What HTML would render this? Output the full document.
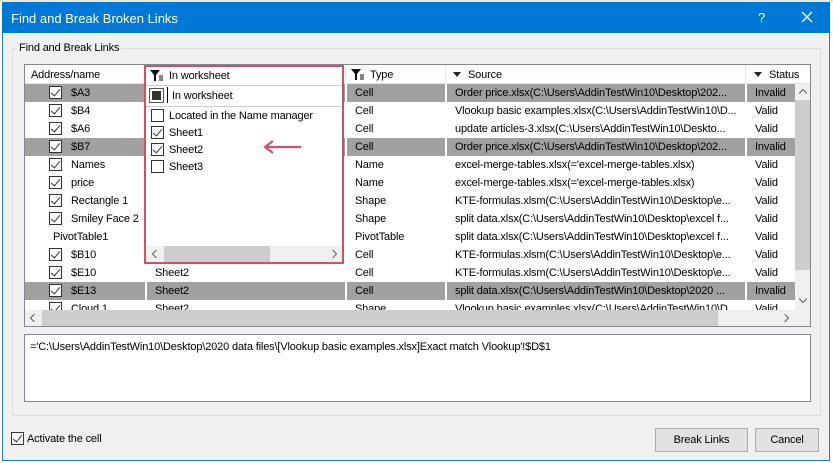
<!DOCTYPE html><html><head><style>
*{box-sizing:border-box;margin:0;padding:0}
body{width:833px;height:463px;position:relative;overflow:hidden;background:#fff;font-family:"Liberation Sans",sans-serif;font-size:11px;color:#000;letter-spacing:-0.15px}
.a{position:absolute}
.dlg{left:2px;top:2px;width:828px;height:459px;background:#f0f0f0;border:1px solid #1c79d4}
.title{left:2px;top:2px;width:828px;height:31px;background:#0078d7;color:#fff;font-size:13px;padding:9px 0 0 9px;letter-spacing:0}
.grp{left:12px;top:48px;width:809px;height:368px;border:1px solid #dcdcdc}
.list{left:24px;top:64px;width:787px;height:263px;background:#fff;border:1px solid #828790;overflow:hidden}
.hdr{left:0;top:0;width:785px;height:19px;background:#fff;border-bottom:1px solid #e5e5e5}
.hc{position:absolute;top:0;height:19px;padding:4px 0 0 6px;border-right:1px solid #e5e5e5}
.row{position:absolute;left:0;width:770px;height:18px}
.row.s{background:#a0a0a0}
.c{position:absolute;top:3px;white-space:nowrap}
.cb{position:absolute;width:13px;height:13px;border:1px solid #333;background:#fff}
.cb.k::after{content:"";position:absolute;left:3px;top:0px;width:4px;height:8px;border:solid #333;border-width:0 1.3px 1.3px 0;transform:rotate(40deg)}
.sep{position:absolute;top:0;width:2px;height:18px;background:#fff}
.pop{left:144px;top:65px;width:200px;height:199px;background:#fff;border:2px solid #d0506a}
.btn{position:absolute;top:428px;height:24px;background:#e1e1e1;border:1px solid #adadad;text-align:center;padding-top:5px}
</style></head><body>
<div class="a" style="left:0;top:0;width:833px;height:2px;background:#e8e8e8"></div>
<div class="a dlg"></div>
<div class="a title">Find and Break Broken Links</div>
<div class="a" style="left:758px;top:10px;color:#fff;font-size:13px">?</div>
<svg class="a" style="left:801px;top:11px" width="12" height="12"><path d="M1 1L11 11M11 1L1 11" stroke="#fff" stroke-width="1.3"/></svg>
<div class="a grp"></div>
<div class="a" style="left:17px;top:42px;background:#f0f0f0;padding:0 2px">Find and Break Links</div>
<div class="a list">
 <div class="a hdr">
  <div class="hc" style="left:0;width:120px">Address/name</div>
  <div class="hc" style="left:120px;width:201px"></div>
  <div class="hc" style="left:321px;width:100px;padding-left:24px">Type</div>
  <div class="hc" style="left:421px;width:300px;padding-left:22px">Source</div>
  <div class="hc" style="left:721px;width:64px;padding-left:23px;border:0">Status</div>
 </div>
 <svg class="a" style="left:326px;top:4px" width="14" height="12"><path d="M0 0H10L6 5V11H4V5Z" fill="#111"/><path d="M9 6H13M9 8H13M9 10H13" stroke="#111" stroke-width="1"/></svg>
 <svg class="a" style="left:428px;top:7px" width="8" height="5"><path d="M0 0H8L4 5Z" fill="#222"/></svg>
 <svg class="a" style="left:729px;top:7px" width="8" height="5"><path d="M0 0H8L4 5Z" fill="#222"/></svg>
 <div class="row s" style="top:19px"><div class="cb k" style="left:24px;top:2px"></div><div class="c" style="left:46px">$A3</div><div class="sep" style="left:320px"></div><div class="c" style="left:330px">Cell</div><div class="sep" style="left:420px"></div><div class="c" style="left:430px">Order price.xlsx(C:\Users\AddinTestWin10\Desktop\202...</div><div class="sep" style="left:720px"></div><div class="c" style="left:730px">Invalid</div></div>
 <div class="row" style="top:37px"><div class="cb k" style="left:24px;top:2px"></div><div class="c" style="left:46px">$B4</div><div class="c" style="left:330px">Cell</div><div class="c" style="left:430px">Vlookup basic examples.xlsx(C:\Users\AddinTestWin10\D...</div><div class="c" style="left:730px">Valid</div></div>
 <div class="row" style="top:55px"><div class="cb k" style="left:24px;top:2px"></div><div class="c" style="left:46px">$A6</div><div class="c" style="left:330px">Cell</div><div class="c" style="left:430px">update articles-3.xlsx(C:\Users\AddinTestWin10\Deskto...</div><div class="c" style="left:730px">Valid</div></div>
 <div class="row s" style="top:73px"><div class="cb k" style="left:24px;top:2px"></div><div class="c" style="left:46px">$B7</div><div class="sep" style="left:320px"></div><div class="c" style="left:330px">Cell</div><div class="sep" style="left:420px"></div><div class="c" style="left:430px">Order price.xlsx(C:\Users\AddinTestWin10\Desktop\202...</div><div class="sep" style="left:720px"></div><div class="c" style="left:730px">Invalid</div></div>
 <div class="row" style="top:91px"><div class="cb k" style="left:24px;top:2px"></div><div class="c" style="left:46px">Names</div><div class="c" style="left:330px">Name</div><div class="c" style="left:430px">excel-merge-tables.xlsx(='excel-merge-tables.xlsx)</div><div class="c" style="left:730px">Valid</div></div>
 <div class="row" style="top:109px"><div class="cb k" style="left:24px;top:2px"></div><div class="c" style="left:46px">price</div><div class="c" style="left:330px">Name</div><div class="c" style="left:430px">excel-merge-tables.xlsx(='excel-merge-tables.xlsx)</div><div class="c" style="left:730px">Valid</div></div>
 <div class="row" style="top:127px"><div class="cb k" style="left:24px;top:2px"></div><div class="c" style="left:46px">Rectangle 1</div><div class="c" style="left:330px">Shape</div><div class="c" style="left:430px">KTE-formulas.xlsm(C:\Users\AddinTestWin10\Desktop\e...</div><div class="c" style="left:730px">Valid</div></div>
 <div class="row" style="top:145px"><div class="cb k" style="left:24px;top:2px"></div><div class="c" style="left:46px">Smiley Face 2</div><div class="c" style="left:330px">Shape</div><div class="c" style="left:430px">split data.xlsx(C:\Users\AddinTestWin10\Desktop\excel f...</div><div class="c" style="left:730px">Valid</div></div>
 <div class="row" style="top:163px"><div class="c" style="left:28px">PivotTable1</div><div class="c" style="left:330px">PivotTable</div><div class="c" style="left:430px">split data.xlsx(C:\Users\AddinTestWin10\Desktop\excel f...</div><div class="c" style="left:730px">Valid</div></div>
 <div class="row" style="top:181px"><div class="cb k" style="left:24px;top:2px"></div><div class="c" style="left:46px">$B10</div><div class="c" style="left:330px">Cell</div><div class="c" style="left:430px">KTE-formulas.xlsm(C:\Users\AddinTestWin10\Desktop\e...</div><div class="c" style="left:730px">Valid</div></div>
 <div class="row" style="top:199px"><div class="cb k" style="left:24px;top:2px"></div><div class="c" style="left:46px">$E10</div><div class="c" style="left:130px">Sheet2</div><div class="c" style="left:330px">Cell</div><div class="c" style="left:430px">KTE-formulas.xlsm(C:\Users\AddinTestWin10\Desktop\e...</div><div class="c" style="left:730px">Valid</div></div>
 <div class="row s" style="top:217px"><div class="cb k" style="left:24px;top:2px"></div><div class="c" style="left:46px">$E13</div><div class="sep" style="left:120px"></div><div class="c" style="left:130px">Sheet2</div><div class="sep" style="left:320px"></div><div class="c" style="left:330px">Cell</div><div class="sep" style="left:420px"></div><div class="c" style="left:430px">split data.xlsx(C:\Users\AddinTestWin10\Desktop\2020 ...</div><div class="sep" style="left:720px"></div><div class="c" style="left:730px">Invalid</div></div>
 <div class="row" style="top:235px"><div class="cb k" style="left:24px;top:2px"></div><div class="c" style="left:46px">Cloud 1</div><div class="c" style="left:130px">Sheet2</div><div class="c" style="left:330px">Shape</div><div class="c" style="left:430px">Vlookup basic examples.xlsx(C:\Users\AddinTestWin10\D...</div><div class="c" style="left:730px">Valid</div></div>
 <div class="a" style="left:770px;top:19px;width:16px;height:226px;background:#f0f0f0"><div class="a" style="left:0;top:16px;width:16px;height:170px;background:#cdcdcd"></div><svg class="a" style="left:4px;top:5px" width="8" height="5"><path d="M0 4.5L4 0.5L8 4.5" fill="none" stroke="#606060"/></svg><svg class="a" style="left:4px;top:214px" width="8" height="5"><path d="M0 0.5L4 4.5L8 0.5" fill="none" stroke="#606060"/></svg></div>
 <div class="a" style="left:0;top:245px;width:786px;height:17px;background:#f0f0f0"><div class="a" style="left:17px;top:0;width:676px;height:17px;background:#cdcdcd"></div><svg class="a" style="left:5px;top:4px" width="5" height="8"><path d="M4.5 0L0.5 4L4.5 8" fill="none" stroke="#606060"/></svg><svg class="a" style="left:759px;top:4px" width="5" height="8"><path d="M0.5 0L4.5 4L0.5 8" fill="none" stroke="#606060"/></svg></div>
</div>
<div class="a pop">
 <svg class="a" style="left:4px;top:3px" width="14" height="12"><path d="M0 0H10L6 5V11H4V5Z" fill="#111"/><path d="M9 6H13M9 8H13M9 10H13" stroke="#111" stroke-width="1"/></svg>
 <div class="a" style="left:23px;top:3px">In worksheet</div>
 <div class="a" style="left:0;top:18px;width:196px;height:1px;background:#ccc"></div>
 <div class="a" style="left:3px;top:21px;width:15px;height:15px;border:1px solid #555;background:#fff"><div class="a" style="left:2px;top:2px;width:9px;height:9px;background:#333"></div></div>
 <div class="a" style="left:21px;top:20px;width:1px;height:16px;background:#000"></div>
 <div class="a" style="left:26px;top:23px">In worksheet</div>
 <div class="a" style="left:0;top:39px;width:196px;height:1px;background:#ccc"></div>
 <div class="cb" style="left:5px;top:42px"></div><div class="a" style="left:23px;top:43px">Located in the Name manager</div>
 <div class="cb k" style="left:5px;top:59px"></div><div class="a" style="left:23px;top:60px">Sheet1</div>
 <div class="cb k" style="left:5px;top:76px"></div><div class="a" style="left:23px;top:77px">Sheet2</div>
 <div class="cb" style="left:5px;top:93px"></div><div class="a" style="left:23px;top:94px">Sheet3</div>
 <div class="a" style="left:0;top:179px;width:196px;height:16px;background:#f0f0f0"><div class="a" style="left:18px;top:0;width:106px;height:16px;background:#cdcdcd"></div><svg class="a" style="left:6px;top:4px" width="5" height="8"><path d="M4.5 0L0.5 4L4.5 8" fill="none" stroke="#606060"/></svg><svg class="a" style="left:186px;top:4px" width="5" height="8"><path d="M0.5 0L4.5 4L0.5 8" fill="none" stroke="#606060"/></svg></div>
</div>
<svg class="a" style="left:263px;top:140px" width="40" height="14"><path d="M2 7H38" stroke="#d0506a" stroke-width="2.2"/><path d="M10 1L2 7L10 13" fill="none" stroke="#d0506a" stroke-width="2.2"/></svg>
<div class="a" style="left:24px;top:334px;width:787px;height:68px;background:#fff;border:1px solid #828790;padding:6px 0 0 5px">='C:\Users\AddinTestWin10\Desktop\2020 data files\[Vlookup basic examples.xlsx]Exact match Vlookup'!$D$1</div>
<div class="cb k" style="left:11px;top:432px"></div>
<div class="a" style="left:27px;top:433px">Activate the cell</div>
<div class="btn" style="left:655px;width:93px">Break Links</div>
<div class="btn" style="left:755px;width:64px">Cancel</div>
</body></html>
